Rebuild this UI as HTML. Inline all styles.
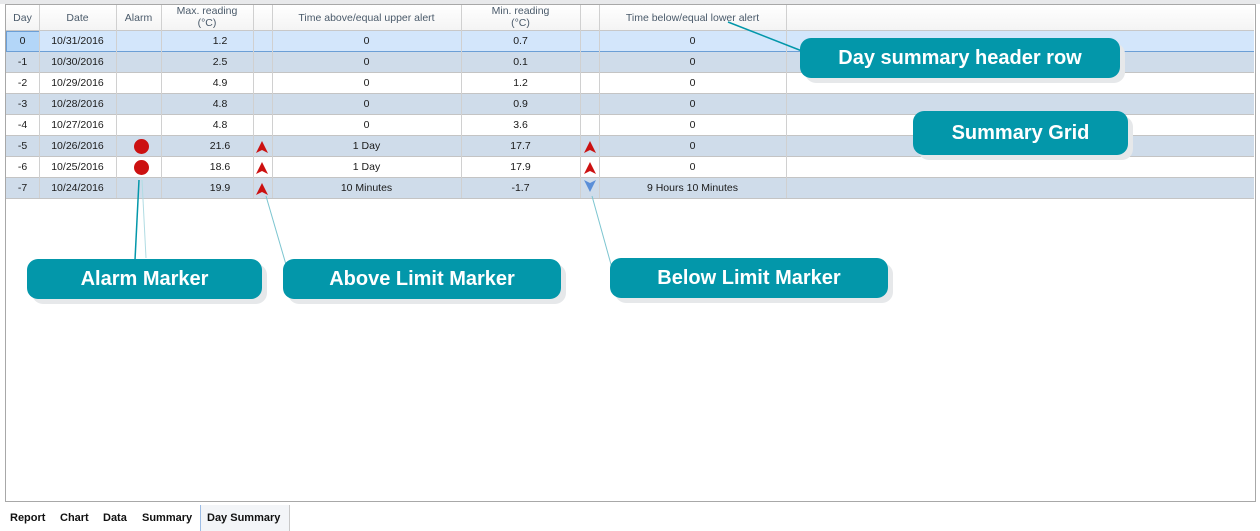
<!DOCTYPE html>
<html><head><meta charset="utf-8"><style>
body{margin:0;width:1260px;height:531px;background:#fff;font-family:"Liberation Sans",sans-serif;position:relative;overflow:hidden}
.a{position:absolute}
.top{left:0;top:0;width:1260px;height:4px;background:#e8e9eb}
.panel{left:5px;top:4px;width:1249px;height:496px;border:1px solid #a8a8a8;background:#fff}
.hdr{left:6px;top:5px;width:1248px;height:25px;background:linear-gradient(#fff,#f4f4f4);border-bottom:1px solid #c8c8c8}
.c{position:absolute;font-size:10.5px;color:#1a1a1a;text-align:center;line-height:21px}
.h{position:absolute;font-size:10.5px;color:#4a5a6a;text-align:center}
.vl{position:absolute;width:1px;background:#d0d0d0;top:5px;height:193px}
.row{position:absolute;left:6px;width:1248px;height:20px;border-bottom:1px solid #c4c4c4}
.co{position:absolute;background:#0397aa;color:#fff;font-weight:bold;font-size:20px;text-align:center;border-radius:11px;box-shadow:5px 5px 0 #e6e8ea;line-height:40px}
.dot{position:absolute;width:15px;height:15px;border-radius:50%;background:#cc1111}
.tab{position:absolute;top:505px;font-size:11px;font-weight:bold;color:#111;line-height:26px}
</style></head><body>
<div class="a top"></div>
<div class="a panel"></div>
<div class="a hdr"></div>
<div class="row" style="top:31px;background:#d3e6fb;border-bottom:1px solid #6c9fd6"></div>
<div class="a" style="left:6px;top:31px;width:34px;height:21px;background:#b3d6f8;border:1px solid #6c9fd6;box-sizing:border-box"></div>
<div class="row" style="top:52px;background:#cfdcea"></div>
<div class="row" style="top:73px;background:#fff"></div>
<div class="row" style="top:94px;background:#cfdcea"></div>
<div class="row" style="top:115px;background:#fff"></div>
<div class="row" style="top:136px;background:#cfdcea"></div>
<div class="row" style="top:157px;background:#fff"></div>
<div class="row" style="top:178px;background:#cfdcea"></div>
<div class="vl" style="left:39px"></div><div class="vl" style="left:116px"></div><div class="vl" style="left:161px"></div>
<div class="vl" style="left:253px"></div><div class="vl" style="left:272px"></div><div class="vl" style="left:461px"></div>
<div class="vl" style="left:580px"></div><div class="vl" style="left:599px"></div><div class="vl" style="left:786px"></div>
<div class="h" style="left:6px;top:12px;width:33px">Day</div>
<div class="h" style="left:39px;top:12px;width:77px">Date</div>
<div class="h" style="left:116px;top:12px;width:45px">Alarm</div>
<div class="h" style="left:161px;top:5px;width:92px;line-height:12px">Max. reading<br>(°C)</div>
<div class="h" style="left:272px;top:12px;width:189px">Time above/equal upper alert</div>
<div class="h" style="left:461px;top:5px;width:119px;line-height:12px">Min. reading<br>(°C)</div>
<div class="h" style="left:599px;top:12px;width:187px">Time below/equal lower alert</div>
<div class="c" style="left:6px;top:31px;width:33px">0<br>-1<br>-2<br>-3<br>-4<br>-5<br>-6<br>-7</div>
<div class="c" style="left:39px;top:31px;width:77px">10/31/2016<br>10/30/2016<br>10/29/2016<br>10/28/2016<br>10/27/2016<br>10/26/2016<br>10/25/2016<br>10/24/2016</div>
<div class="c" style="left:161px;top:31px;width:118px">1.2<br>2.5<br>4.9<br>4.8<br>4.8<br>21.6<br>18.6<br>19.9</div>
<div class="c" style="left:272px;top:31px;width:189px">0<br>0<br>0<br>0<br>0<br>1 Day<br>1 Day<br>10 Minutes</div>
<div class="c" style="left:461px;top:31px;width:119px">0.7<br>0.1<br>1.2<br>0.9<br>3.6<br>17.7<br>17.9<br>-1.7</div>
<div class="c" style="left:599px;top:31px;width:187px">0<br>0<br>0<br>0<br>0<br>0<br>0<br>9 Hours 10 Minutes</div>
<div class="dot" style="left:134px;top:139px"></div>
<div class="dot" style="left:134px;top:160px"></div>
<svg class="a" style="left:0;top:0" width="1260" height="531">
<g fill="#cc1111">
<path d="M262 141 L268 153 L262 150 L256 153Z"/>
<path d="M262 162 L268 174 L262 171 L256 174Z"/>
<path d="M262 183 L268 195 L262 192 L256 195Z"/>
<path d="M590 141 L596 153 L590 150 L584 153Z"/>
<path d="M590 162 L596 174 L590 171 L584 174Z"/>
</g>
<path d="M590 192 L596 180 L590 183 L584 180Z" fill="#5b8fd8"/>
<g stroke="#0397aa" fill="none">
<line x1="728" y1="22" x2="802" y2="51" stroke-width="1.5"/>
<line x1="139" y1="180" x2="135" y2="260" stroke-width="1.5"/>
<line x1="142" y1="180" x2="146" y2="258" stroke="#b0dce3"/>
<line x1="266" y1="196" x2="287" y2="268" stroke="#7cc5d0"/>
<line x1="592" y1="196" x2="612" y2="268" stroke="#7cc5d0"/>
</g>
</svg>
<div class="co" style="left:800px;top:38px;width:320px;height:40px">Day summary header row</div>
<div class="co" style="left:913px;top:111px;width:215px;height:44px;line-height:44px">Summary Grid</div>
<div class="co" style="left:27px;top:259px;width:235px;height:40px">Alarm Marker</div>
<div class="co" style="left:283px;top:259px;width:278px;height:40px">Above Limit Marker</div>
<div class="co" style="left:610px;top:258px;width:278px;height:40px">Below Limit Marker</div>
<div class="a" style="left:200px;top:505px;width:88px;height:26px;background:#f3f5f8;border-left:1px solid #9dbde6;border-right:1px solid #c8c8c8"></div>
<div class="tab" style="left:10px">Report</div>
<div class="tab" style="left:60px">Chart</div>
<div class="tab" style="left:103px">Data</div>
<div class="tab" style="left:142px">Summary</div>
<div class="tab" style="left:207px">Day Summary</div>
</body></html>
